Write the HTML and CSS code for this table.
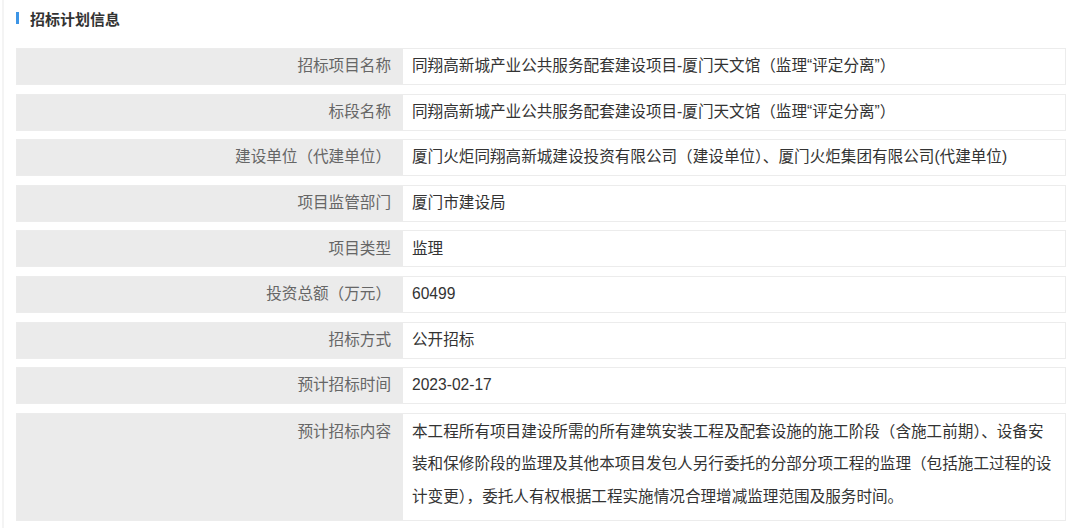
FILE: index.html
```html
<!DOCTYPE html>
<html lang="zh-CN">
<head>
<meta charset="utf-8">
<title>招标计划信息</title>
<link rel="stylesheet" href="styles.css">
</head>
<body>
<div class="panel">
  <div class="title">招标计划信息</div>
  <div class="table">
    <div class="row"><div class="label">招标项目名称</div><div class="value">同翔高新城产业公共服务配套建设项目-厦门天文馆（监理“评定分离”）</div></div>
    <div class="row"><div class="label">标段名称</div><div class="value">同翔高新城产业公共服务配套建设项目-厦门天文馆（监理“评定分离”）</div></div>
    <div class="row"><div class="label">建设单位（代建单位）</div><div class="value">厦门火炬同翔高新城建设投资有限公司（建设单位）、厦门火炬集团有限公司(代建单位)</div></div>
    <div class="row"><div class="label">项目监管部门</div><div class="value">厦门市建设局</div></div>
    <div class="row"><div class="label">项目类型</div><div class="value">监理</div></div>
    <div class="row"><div class="label">投资总额（万元）</div><div class="value">60499</div></div>
    <div class="row"><div class="label">招标方式</div><div class="value">公开招标</div></div>
    <div class="row"><div class="label">预计招标时间</div><div class="value">2023-02-17</div></div>
    <div class="row tall"><div class="label">预计招标内容</div><div class="value">本工程所有项目建设所需的所有建筑安装工程及配套设施的施工阶段（含施工前期）、设备安装和保修阶段的监理及其他本项目发包人另行委托的分部分项工程的监理（包括施工过程的设计变更），委托人有权根据工程实施情况合理增减监理范围及服务时间。</div></div>
  </div>
</div>
</body>
</html>
```

FILE: styles.css
```css
html, body {
  margin: 0;
  padding: 0;
  background: #fff;
}

body {
  font-family: "Liberation Sans", "Noto Sans CJK SC", sans-serif;
  color: #333;
}

.panel {
  margin-left: 2px;
  border-left: 2px solid #f4f4f4;
  padding: 0 14px 0 12px;
  min-height: 528px;
  box-sizing: border-box;
}

.title {
  display: flex;
  align-items: center;
  height: 36px;
  font-size: 15px;
  font-weight: bold;
  color: #333;
  font-family: "Noto Sans CJK SC", sans-serif;
}

.title::before {
  content: "";
  display: block;
  width: 3px;
  height: 12px;
  background: #3d95e6;
  margin-right: 11px;
}

.table {
  margin-top: 12px;
  display: flex;
  flex-direction: column;
  gap: 8.6px;
}

.row {
  display: flex;
  border: 1px solid #ececec;
  font-size: 15.6px;
  line-height: 32.5px;
}

.label {
  flex: 0 0 386px;
  background: #ebebeb;
  color: #666;
  text-align: right;
  padding: 1.25px 12px 1.25px 0;
  box-sizing: border-box;
}

.value {
  flex: 1;
  background: #fff;
  color: #333;
  padding: 1.25px 6px 1.25px 9px;
}

.row.tall .label,
.row.tall .value {
  padding-top: 2px;
  padding-bottom: 7px;
}
```
